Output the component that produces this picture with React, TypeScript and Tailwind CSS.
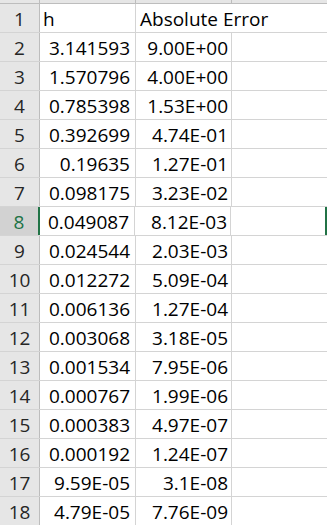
import React from 'react';

const rows: [string, string][] = [
    ['3.141593', '9.00E+00'],
    ['1.570796', '4.00E+00'],
    ['0.785398', '1.53E+00'],
    ['0.392699', '4.74E-01'],
    ['0.19635', '1.27E-01'],
    ['0.098175', '3.23E-02'],
    ['0.049087', '8.12E-03'],
    ['0.024544', '2.03E-03'],
    ['0.012272', '5.09E-04'],
    ['0.006136', '1.27E-04'],
    ['0.003068', '3.18E-05'],
    ['0.001534', '7.95E-06'],
    ['0.000767', '1.99E-06'],
    ['0.000383', '4.97E-07'],
    ['0.000192', '1.24E-07'],
    ['9.59E-05', '3.1E-08'],
    ['4.79E-05', '7.76E-09'],
];

const SELECTED = 8;

export default function App() {
    return (
        <div
            className="w-[327px] h-[525px] overflow-hidden bg-white text-[19px] text-black"
            style={{ fontFamily: '"Open Sans", "Liberation Sans", sans-serif' }}
        >
            {/* bottom of column header strip */}
            <div className="flex h-[4px] bg-[#e6e6e6] border-b border-[#bdbdbd]">
                <div className="w-[40px] border-r border-[#bdbdbd]" />
                <div className="w-[96px] border-r border-[#bdbdbd]" />
                <div className="w-[96px] border-r border-[#bdbdbd]" />
                <div className="flex-1" />
            </div>

            {/* row 1: labels, "Absolute Error" overflows into C */}
            <div className="flex h-[29px] border-b border-[#d4d4d4]">
                <div className="w-[40px] shrink-0 flex items-end justify-center pb-[3px] bg-[#e6e6e6] border-r border-[#bdbdbd] text-[#262626] leading-none">
                    1
                </div>
                <div className="w-[96px] shrink-0 flex items-end pl-[3px] pb-[3px] border-r border-[#d4d4d4] leading-none">
                    h
                </div>
                <div className="flex-1 flex items-end pl-[4px] pb-[3px] leading-none whitespace-nowrap">
                    Absolute Error
                </div>
            </div>

            {rows.map(([h, err], i) => {
                const n = i + 2;
                const sel = n === SELECTED;
                return (
                    <div key={n} className="flex h-[29px] border-b border-[#d4d4d4]">
                        <div
                            className={
                                sel
                                    ? 'w-[40px] shrink-0 flex items-end justify-center pb-[3px] bg-[#d2d2d2] border-r-2 border-[#217346] text-[#217346] leading-none'
                                    : 'w-[40px] shrink-0 flex items-end justify-center pb-[3px] bg-[#e6e6e6] border-r border-[#bdbdbd] text-[#262626] leading-none'
                            }
                        >
                            {n}
                        </div>
                        <div
                            className={
                                sel
                                    ? 'w-[95px] shrink-0 flex items-end justify-end pr-[5px] pb-[3px] border-r border-[#d4d4d4] leading-none'
                                    : 'w-[96px] shrink-0 flex items-end justify-end pr-[5px] pb-[3px] border-r border-[#d4d4d4] leading-none'
                            }
                        >
                            {h}
                        </div>
                        <div className="w-[96px] shrink-0 flex items-end justify-end pr-[3px] pb-[3px] border-r border-[#d4d4d4] leading-none">
                            {err}
                        </div>
                        <div className={sel ? 'flex-1 border-r-2 border-[#217346]' : 'flex-1'} />
                    </div>
                );
            })}
        </div>
    );
}
